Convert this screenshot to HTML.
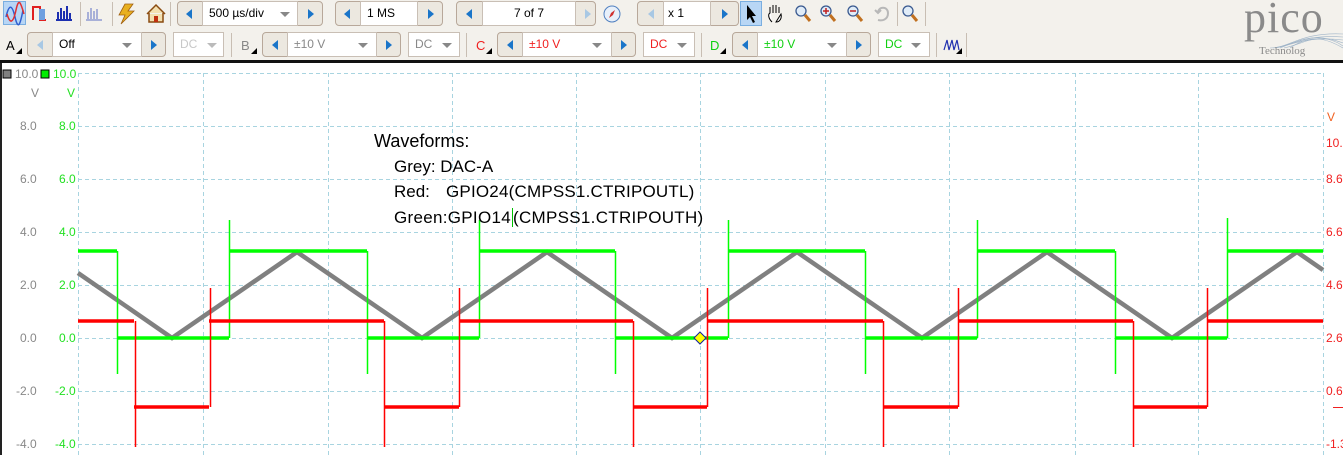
<!DOCTYPE html>
<html><head><meta charset="utf-8"><style>
*{margin:0;padding:0;box-sizing:border-box}
body{width:1343px;height:455px;overflow:hidden;background:#fff;font-family:"Liberation Sans",sans-serif;position:relative}
.tb{position:absolute;left:0;top:0;width:1343px;height:60px;background:#f3f1ec}
.a{position:absolute}
.grp{position:absolute;border:1px solid #b8a89a;border-radius:4px;background:#ece8e0;height:25px}
.fld{position:absolute;background:#fff;border:1px solid #c9bfb5;height:25px;font-size:12px;line-height:23px;padding-left:6px;color:#000}
.arr{position:absolute;width:0;height:0;border-top:5px solid transparent;border-bottom:5px solid transparent}
.l{border-right:6px solid #1a75c9}
.r{border-left:6px solid #1a75c9}
.lg{border-right:6px solid #a8c8e4}
.rg{border-left:6px solid #a8c8e4}
.dd{position:absolute;width:0;height:0;border-left:5px solid transparent;border-right:5px solid transparent;border-top:5px solid #888}
.ch{position:absolute;font-size:13px;top:38px}
.tri{position:absolute;width:0;height:0;border-left:6px solid transparent;border-bottom:6px solid #000}
.sep{position:absolute;width:1px;background:#c8beb3}
.lab{position:absolute;font-size:12px;width:40px}
.tx{position:absolute;font-size:17px;color:#000;white-space:nowrap}
</style></head><body>
<div class="tb">
 <div class="a" style="left:3px;top:1px;width:23px;height:24px;background:#b8d6f5;border:1px solid #7aaee0"></div>
 <svg class="a" style="left:0;top:0" width="175" height="28">
  <path d="M6 17 C9 4,12 4,15 17 S20 26,23 10" stroke="#2f5fd0" fill="none" stroke-width="1.5"/>
  <path d="M7 14 C10 24,13 24,16 10 S21 4,24 14" stroke="#e03030" fill="none" stroke-width="1.5"/>
  <path d="M33 20 V7 H40 V20 H46" stroke="#e02020" fill="none" stroke-width="2"/>
  <rect x="39" y="9" width="6" height="11" fill="#6fa0e0"/>
  <path d="M58 20 V12 M61 20 V8 M64 20 V11 M67 20 V6 M70 20 V13 M56 20 H72" stroke="#1c2fb0" stroke-width="2"/>
  <path d="M88 20 V12 M91 20 V8 M94 20 V11 M97 20 V9 M86 20 H102" stroke="#a8b0d8" stroke-width="2"/>
  <path d="M125 4 L119 15 H125 L121 24 L134 11 H128 L133 4Z" fill="#e8b020" stroke="#a06010" stroke-width="0.8"/>
  <path d="M147 14 L156 5 L165 14 M149 13 V22 H163 V13" fill="#f3e0b0" stroke="#8a4b10" stroke-width="1.5"/>
  <rect x="154" y="16" width="4" height="6" fill="#c03010"/>
 </svg>
 <div class="sep" style="left:80px;top:2px;height:24px"></div>
 <div class="sep" style="left:112px;top:2px;height:24px"></div>
 <div class="sep" style="left:170px;top:2px;height:24px"></div>
 <div class="grp" style="left:177px;top:1px;width:146px"></div>
 <div class="arr l" style="left:186px;top:9px"></div>
 <div class="fld" style="left:202px;top:1px;width:96px">500 µs/div</div><div class="dd" style="left:280px;top:12px"></div>
 <div class="arr r" style="left:308px;top:9px"></div>
 <div class="grp" style="left:335px;top:1px;width:108px"></div>
 <div class="arr l" style="left:344px;top:9px"></div>
 <div class="fld" style="left:360px;top:1px;width:58px">1 MS</div>
 <div class="arr r" style="left:428px;top:9px"></div>
 <div class="grp" style="left:456px;top:1px;width:140px"></div>
 <div class="arr l" style="left:466px;top:9px"></div>
 <div class="fld" style="left:482px;top:1px;width:94px;text-align:center;padding:0">7 of 7</div>
 <div class="arr rg" style="left:585px;top:9px"></div>
 <svg class="a" style="left:603px;top:5px" width="18" height="18"><circle cx="9" cy="9" r="8" fill="#e8f0fa" stroke="#5080c0"/><path d="M12 5 L8 8 L6 13 L10 10Z" fill="#d03030"/></svg>
 <div class="grp" style="left:637px;top:1px;width:102px"></div>
 <div class="arr lg" style="left:648px;top:9px"></div>
 <div class="fld" style="left:663px;top:1px;width:48px;padding-left:4px">x 1</div>
 <div class="arr r" style="left:722px;top:9px"></div>
 <div class="a" style="left:740px;top:1px;width:22px;height:25px;background:#b8d6f5;border:1px solid #7aaee0"></div>
 <svg class="a" style="left:740px;top:0" width="190" height="28">
  <path d="M7 5 V20 L10 17 L13 23 L15 22 L12 16 H16Z" fill="#000"/>
  <path d="M32 22 C28 18,28 14,30 13 V7 M33 13 V5 M36 13 V5 M39 13 V7 M41 14 C42 18,40 22,36 22Z" fill="#fff" stroke="#000" stroke-width="1"/>
  <g fill="#e0ecf8" stroke="#3a5a90" stroke-width="1.3"><circle cx="61" cy="11" r="5"/><circle cx="86" cy="11" r="5"/><circle cx="113" cy="11" r="5"/><circle cx="168" cy="11" r="5"/></g>
  <path d="M65 15 L70 21 M90 15 L95 21 M117 15 L122 21 M172 15 L177 21" stroke="#c07020" stroke-width="3"/>
  <path d="M83 11 H89 M86 8 V14 M110 11 H116" stroke="#c02020" stroke-width="1.5"/>
  <path d="M138 13 C138 6,148 6,148 13 S142 21,138 20 M135 10 L138 13 L141 10" stroke="#b8b8b8" fill="none" stroke-width="2"/>
 </svg>
 <div class="sep" style="left:897px;top:2px;height:24px"></div>
 <div class="sep" style="left:925px;top:2px;height:24px"></div>
 <div class="a" style="left:1244px;top:-8px;font-family:'Liberation Serif',serif;font-size:44px;color:#8a8a8a;letter-spacing:1px">pico</div>
 <svg class="a" style="left:1270px;top:30px" width="73" height="20"><g stroke="#9fb4c8" stroke-width="0.6" fill="none"><path d="M0 18 C20 18,30 2,73 4"/><path d="M3 18 C22 16,34 4,73 7"/><path d="M6 18 C24 14,38 6,73 10"/><path d="M10 18 C30 10,44 2,73 13"/><path d="M14 18 C34 14,50 0,73 16"/><path d="M20 18 C40 4,56 8,73 18"/></g></svg>
 <div class="a" style="left:1259px;top:45px;font-family:'Liberation Serif',serif;font-size:11px;color:#8a8a8a">Technolog</div>

 <div class="ch" style="left:6px">A</div><div class="tri" style="left:16px;top:48px"></div>
 <div class="grp" style="left:27px;top:32px;width:139px"></div>
 <div class="arr lg" style="left:37px;top:40px"></div>
 <div class="fld" style="left:52px;top:32px;width:90px">Off</div><div class="dd" style="left:122px;top:43px"></div>
 <div class="arr r" style="left:151px;top:40px"></div>
 <div class="fld" style="left:173px;top:32px;width:51px;color:#c8c8c8">DC</div><div class="dd" style="left:207px;top:43px;border-top-color:#bbb"></div>
 <div class="sep" style="left:231px;top:33px;height:24px"></div>
 <div class="ch" style="left:241px;color:#888">B</div><div class="tri" style="left:251px;top:48px"></div>
 <div class="grp" style="left:262px;top:32px;width:139px"></div>
 <div class="arr l" style="left:272px;top:40px"></div>
 <div class="fld" style="left:287px;top:32px;width:90px;color:#888">±10 V</div><div class="dd" style="left:358px;top:43px"></div>
 <div class="arr r" style="left:386px;top:40px"></div>
 <div class="fld" style="left:408px;top:32px;width:52px;color:#888">DC</div><div class="dd" style="left:442px;top:43px"></div>
 <div class="sep" style="left:466px;top:33px;height:24px"></div>
 <div class="ch" style="left:476px;color:#f02020">C</div><div class="tri" style="left:486px;top:48px"></div>
 <div class="grp" style="left:497px;top:32px;width:139px"></div>
 <div class="arr l" style="left:507px;top:40px"></div>
 <div class="fld" style="left:522px;top:32px;width:90px;color:#f02020">±10 V</div><div class="dd" style="left:592px;top:43px"></div>
 <div class="arr r" style="left:621px;top:40px"></div>
 <div class="fld" style="left:643px;top:32px;width:52px;color:#f02020">DC</div><div class="dd" style="left:677px;top:43px"></div>
 <div class="sep" style="left:701px;top:33px;height:24px"></div>
 <div class="ch" style="left:710px;color:#10d010">D</div><div class="tri" style="left:720px;top:48px"></div>
 <div class="grp" style="left:732px;top:32px;width:139px"></div>
 <div class="arr l" style="left:742px;top:40px"></div>
 <div class="fld" style="left:757px;top:32px;width:90px;color:#10d010">±10 V</div><div class="dd" style="left:827px;top:43px"></div>
 <div class="arr r" style="left:856px;top:40px"></div>
 <div class="fld" style="left:878px;top:32px;width:52px;color:#10d010">DC</div><div class="dd" style="left:911px;top:43px"></div>
 <div class="sep" style="left:936px;top:33px;height:24px"></div>
 <svg class="a" style="left:942px;top:36px" width="22" height="20"><path d="M2 14 L5 4 L7 14 L10 4 L12 14 L15 4 L17 14" stroke="#2030b0" fill="none" stroke-width="1.2"/><path d="M14 18 L20 12 V18Z" fill="#000"/></svg>
 <div class="sep" style="left:966px;top:33px;height:24px"></div>
</div>
<div class="a" style="left:0;top:60px;width:1343px;height:3px;background:#111"></div>
<div class="a" style="left:0;top:63px;width:2px;height:392px;background:#222"></div>

<svg class="a" style="left:0;top:0" width="1343" height="455">
 <g stroke="#a8d4e0" stroke-width="1" stroke-dasharray="4,3">
  <path d="M78.5 73 V455 M203.5 73 V455 M328.5 73 V455 M452.5 73 V455 M576.5 73 V455 M700.5 73 V455 M825.5 73 V455 M949.5 73 V455 M1075.5 73 V455 M1198.5 73 V455 M1323.5 73 V455"/>
  <path d="M78 73.5 H1323 M78 126.5 H1323 M78 179.5 H1323 M78 232.5 H1323 M78 285.5 H1323 M78 338.5 H1323 M78 391.5 H1323 M78 444.5 H1323"/>
 </g>
 <path d="M78 273 L172 338 L297 252 L422 338 L547 252 L672 338 L797 252 L922 338 L1047 252 L1172 338 L1297 252 L1323 270" stroke="#808080" stroke-width="4.5" fill="none"/>
 <g stroke="#00ff00" fill="none">
  <path stroke-width="3.5" d="M78 251 H117 M117 338 H229 M229 251 H367 M367 338 H479 M479 251 H615 M615 338 H728 M728 251 H865 M865 338 H977 M977 251 H1115 M1115 338 H1227 M1227 251 H1323"/>
  <path stroke-width="1.5" d="M117.5 251 V374 M229.5 338 V220 M367.5 251 V374 M479.5 338 V220 M615.5 251 V374 M728.5 338 V220 M865.5 251 V374 M977.5 338 V220 M1115.5 251 V374 M1227.5 338 V218"/>
 </g>
 <g stroke="#ff0000" fill="none">
  <path stroke-width="3.5" d="M78 321 H134 M134 407 H209 M209 321 H384 M384 407 H459 M459 321 H633 M633 407 H707 M707 321 H883 M883 407 H958 M958 321 H1133 M1133 407 H1207 M1207 321 H1323"/>
  <path stroke-width="1.5" d="M135.5 321 V447 M210.5 407 V288 M384.5 321 V447 M459.5 407 V288 M633.5 321 V447 M707.5 407 V288 M883.5 321 V447 M958.5 407 V288 M1133.5 321 V447 M1207.5 407 V288"/>
 </g>
 <path d="M700 332 L706 338 L700 344 L694 338Z" fill="#ffff00" stroke="#1020a0" stroke-width="1"/>
 <rect x="3" y="70" width="8" height="8" fill="#808080" stroke="#000"/>
 <rect x="41" y="70" width="8" height="8" fill="#00ee00" stroke="#000"/>
</svg>

<div class="lab" style="left:15px;top:67px;color:#888">10.0</div>
<div class="lab" style="left:53px;top:67px;color:#22e022">10.0</div>
<div class="lab" style="left:31px;top:86px;color:#888">V</div>
<div class="lab" style="left:67px;top:86px;color:#22e022">V</div>
<div class="lab" style="left:20px;top:119px;color:#888">8.0</div><div class="lab" style="left:59px;top:119px;color:#22e022">8.0</div>
<div class="lab" style="left:20px;top:172px;color:#888">6.0</div><div class="lab" style="left:59px;top:172px;color:#22e022">6.0</div>
<div class="lab" style="left:20px;top:225px;color:#888">4.0</div><div class="lab" style="left:59px;top:225px;color:#22e022">4.0</div>
<div class="lab" style="left:20px;top:278px;color:#888">2.0</div><div class="lab" style="left:59px;top:278px;color:#22e022">2.0</div>
<div class="lab" style="left:20px;top:331px;color:#888">0.0</div><div class="lab" style="left:59px;top:331px;color:#22e022">0.0</div>
<div class="lab" style="left:16px;top:384px;color:#888">-2.0</div><div class="lab" style="left:55px;top:384px;color:#22e022">-2.0</div>
<div class="lab" style="left:16px;top:437px;color:#888">-4.0</div><div class="lab" style="left:55px;top:437px;color:#22e022">-4.0</div>

<div class="lab" style="left:1327px;top:110px;color:#f06020">V</div>
<div class="lab" style="left:1326px;top:136px;color:#f02020">10.</div>
<div class="lab" style="left:1326px;top:172px;color:#f02020">8.6</div>
<div class="lab" style="left:1326px;top:225px;color:#f02020">6.6</div>
<div class="lab" style="left:1326px;top:278px;color:#f02020">4.6</div>
<div class="lab" style="left:1326px;top:331px;color:#f02020">2.6</div>
<div class="lab" style="left:1326px;top:384px;color:#f02020">0.6</div>
<div class="a" style="left:1333px;top:407px;width:10px;height:1px;background:#f02020"></div>
<div class="lab" style="left:1326px;top:437px;color:#f02020">-1.3</div>

<div class="tx" style="left:374px;top:131px;font-size:18px">Waveforms:</div>
<div class="tx" style="left:394px;top:157px">Grey: DAC-A</div>
<div class="tx" style="left:394px;top:182px">Red:</div>
<div class="tx" style="left:446px;top:182px;letter-spacing:0.2px">GPIO24(CMPSS1.CTRIPOUTL)</div>
<div class="tx" style="left:394px;top:208px;letter-spacing:0.3px">Green:GPIO14<span style="border-left:1px solid #00c000;margin-left:1px"></span>(CMPSS1.CTRIPOUTH)</div>
</body></html>
